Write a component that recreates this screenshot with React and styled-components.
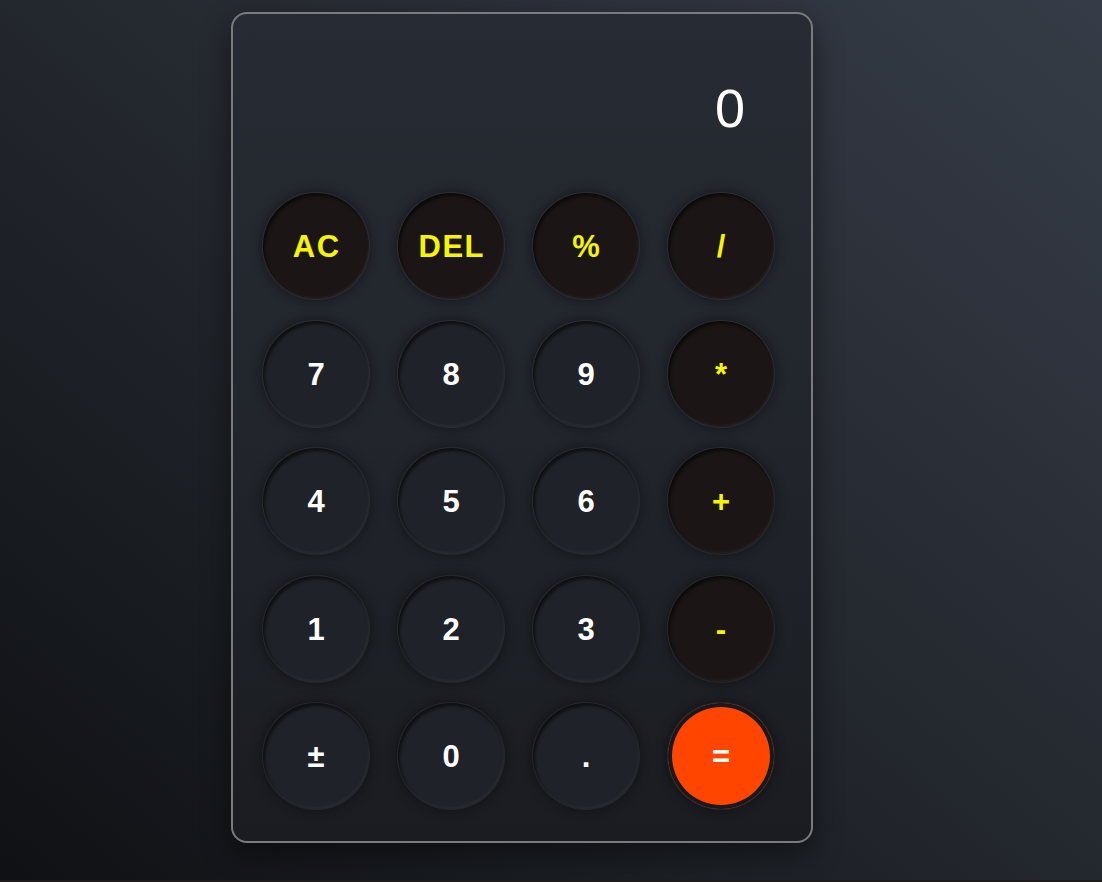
import React from "react";
import styled, { createGlobalStyle } from "styled-components";

const Global = createGlobalStyle`
  html, body { margin: 0; padding: 0; background: #201b19; }
  body { font-family: "Liberation Sans", Arial, sans-serif; overflow: hidden; }
`;

const Page = styled.div`
  height: 880px;
  box-sizing: border-box;
  padding: 12px 0 0 231px;
  background: linear-gradient(40deg, #0f1114 0%, #23272e 50%, #363c47 100%);
`;

const Card = styled.div`
  width: 582px;
  box-sizing: border-box;
  border: 2px solid #7a7b7e;
  border-radius: 16px;
  background: linear-gradient(180deg, #272b33 0%, #22262d 45%, #1a1c21 100%);
  box-shadow: 0 10px 30px rgba(0, 0, 0, 0.45);
  padding-bottom: 31px;
`;

const Display = styled.div`
  height: 178px;
  box-sizing: border-box;
  padding: 67px 66px 0 0;
  text-align: right;
  color: #ffffff;
  font-size: 54px;
  line-height: 54px;
  font-weight: 400;
`;

const Keys = styled.div`
  display: grid;
  grid-template-columns: repeat(4, 108px);
  grid-auto-rows: 108px;
  column-gap: 27px;
  row-gap: 19.5px;
  padding-left: 29px;
`;

const bgFor = (v) =>
  v === "op" ? "#1b1615" : v === "eq" ? "#ff4500" : "#1f2228";

const Key = styled.button`
  width: 108px;
  height: 108px;
  border-radius: 50%;
  border: 1px solid rgba(255, 255, 255, 0.07);
  background: ${(p) => bgFor(p.$variant)};
  background-clip: padding-box;
  color: ${(p) => (p.$variant === "op" ? "#f5f500" : "#ffffff")};
  font-family: "Liberation Sans", Arial, sans-serif;
  font-weight: 700;
  font-size: 31px;
  letter-spacing: 1.5px;
  display: flex;
  align-items: center;
  justify-content: center;
  padding: 2px 0 0 1.5px;
  cursor: pointer;
  box-shadow: ${(p) =>
    p.$variant === "eq"
      ? "0 0 12px rgba(0,0,0,0.45), inset 0 0 0 4px #17191c"
      : "0 0 12px rgba(0,0,0,0.45), inset 2px 3px 3px rgba(0,0,0,0.55), inset -1px -2px 2px rgba(255,255,255,0.04)"};
`;

const keys = [
  ["AC", "op"], ["DEL", "op"], ["%", "op"], ["/", "op"],
  ["7"], ["8"], ["9"], ["*", "op"],
  ["4"], ["5"], ["6"], ["+", "op"],
  ["1"], ["2"], ["3"], ["-", "op"],
  ["±"], ["0"], ["."], ["=", "eq"],
];

export default function App() {
  return (
    <>
      <Global />
      <Page>
        <Card>
          <Display>0</Display>
          <Keys>
            {keys.map(([label, variant]) => (
              <Key key={label} $variant={variant}>
                {label}
              </Key>
            ))}
          </Keys>
        </Card>
      </Page>
    </>
  );
}
